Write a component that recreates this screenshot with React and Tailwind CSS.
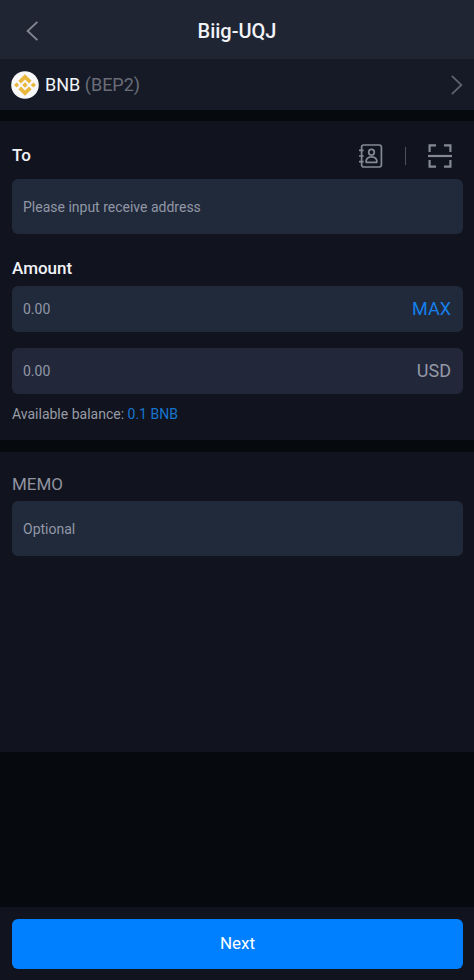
import React, { useState } from 'react';

const BackIcon = () => (
  <svg className="w-3 h-5" viewBox="0 0 12 20" fill="none" stroke="currentColor" strokeWidth="1.8">
    <path d="M11.4 0.8L1.6 10L11.4 19.2" />
  </svg>
);

const ForwardIcon = () => (
  <svg className="w-3 h-5" viewBox="0 0 12 20" fill="none" stroke="currentColor" strokeWidth="1.8">
    <path d="M0.8 0.8L10.4 10L0.8 19.2" />
  </svg>
);

const BnbLogo = () => (
  <svg className="w-7 h-7" viewBox="0 0 28 28">
    <circle cx="14" cy="14" r="13.8" fill="#f8f8fa" />
    <g fill="#e8b73c">
      <path d="M14 3.2L20.6 9.8L18 12.4L14 8.4L10 12.4L7.4 9.8Z" />
      <path d="M14 24.8L20.6 18.2L18 15.6L14 19.6L10 15.6L7.4 18.2Z" />
      <path d="M14 11.3L16.7 14L14 16.7L11.3 14Z" />
      <path d="M5.6 11.4L8.2 14L5.6 16.6L3 14Z" />
      <path d="M22.4 11.4L25 14L22.4 16.6L19.8 14Z" />
    </g>
  </svg>
);

const ContactsIcon = () => (
  <svg className="w-6 h-6" viewBox="0 0 24 24" fill="none" stroke="currentColor" strokeWidth="1.7">
    <rect x="2.6" y="1" width="19.8" height="22" rx="2.2" />
    <path d="M0 6.4H4.6M0 12H4.6M0 17.6H4.6" />
    <circle cx="12.5" cy="8.2" r="2.8" />
    <path d="M7.2 18.4C6.6 15 9 12.8 12.5 12.8C16 12.8 18.4 15 17.8 18.4Z" strokeLinejoin="round" />
  </svg>
);

const ScanIcon = () => (
  <svg className="w-6 h-6" viewBox="0 0 24 24" fill="none" stroke="currentColor" strokeWidth="2.2">
    <path d="M1.6 8V1.4H8M16 1.4H22.4V8M22.4 16V22.6H16M8 22.6H1.6V16" />
    <path d="M0 12H24" />
  </svg>
);

const App = () => {
  const [address, setAddress] = useState('');
  const [amount, setAmount] = useState('');
  const [fiat, setFiat] = useState('');
  const [memo, setMemo] = useState('');

  return (
    <div className="min-h-screen flex flex-col bg-[#060a0f] text-[#f1f3f8] font-[Roboto,sans-serif]">
      {/* Header */}
      <header className="grid grid-cols-[1fr_auto_1fr] items-center h-[59px] px-[26px] pt-[2px] bg-[#1f2532]">
        <button type="button" aria-label="Back" className="justify-self-start text-[#848891]">
          <BackIcon />
        </button>
        <h1 className="text-xl font-medium">Biig-UQJ</h1>
      </header>

      {/* Coin */}
      <button type="button" className="flex items-center h-[51px] px-[11px] bg-[#151a26] text-left">
        <BnbLogo />
        <span className="ml-1.5 flex-1 text-lg">
          BNB <span className="text-[#6a6d77]">(BEP2)</span>
        </span>
        <span className="text-[#5d626d]">
          <ForwardIcon />
        </span>
      </button>

      {/* Address and amount */}
      <section className="mt-[11px] pl-3 pr-[11px] pt-[23px] pb-4 bg-[#11141f]">
        <div className="flex items-center justify-between h-6 pr-[11px]">
          <label htmlFor="address" className="text-[17px] font-medium">To</label>
          <div className="flex items-center text-[#858994]">
            <button type="button" aria-label="Contacts">
              <ContactsIcon />
            </button>
            <div className="mx-[22px] w-px h-[18px] bg-[#4d515c]"></div>
            <button type="button" aria-label="Scan">
              <ScanIcon />
            </button>
          </div>
        </div>
        <input
          id="address"
          value={address}
          onChange={(e) => setAddress(e.target.value)}
          placeholder="Please input receive address"
          className="mt-[11px] block w-full h-[55px] px-[11px] rounded-md bg-[#212a3b] text-sm placeholder:text-[#9297a6] outline-none"
        />

        <label htmlFor="amount" className="block mt-[22px] text-[17px] leading-6 font-medium">Amount</label>
        <div className="flex items-center mt-1.5 h-[46px] pl-[11px] pr-3 rounded-md bg-[#212a3b]">
          <input
            id="amount"
            value={amount}
            onChange={(e) => setAmount(e.target.value)}
            placeholder="0.00"
            className="flex-1 min-w-0 text-sm placeholder:text-[#9297a6] outline-none"
          />
          <button type="button" onClick={() => setAmount('0.1')} className="text-lg text-[#167fea]">
            MAX
          </button>
        </div>
        <div className="flex items-center mt-4 h-[46px] pl-[11px] pr-3 rounded-md bg-[#22283a]">
          <input
            aria-label="Amount in USD"
            value={fiat}
            onChange={(e) => setFiat(e.target.value)}
            placeholder="0.00"
            className="flex-1 min-w-0 text-sm placeholder:text-[#9297a6] outline-none"
          />
          <span className="text-lg text-[#9599a6]">USD</span>
        </div>
        <p className="mt-2.5 text-sm text-[#989ba6]">
          Available balance: <span className="text-[#1674d0]">0.1 BNB</span>
        </p>
      </section>

      {/* Memo */}
      <section className="mt-3 pl-3 pr-[11px] pt-5 min-h-[300px] bg-[#11141f]">
        <label htmlFor="memo" className="block text-[17px] leading-6 text-[#9093a0]">MEMO</label>
        <input
          id="memo"
          value={memo}
          onChange={(e) => setMemo(e.target.value)}
          placeholder="Optional"
          className="mt-[5px] block w-full h-[55px] px-[11px] rounded-md bg-[#212a3b] text-sm placeholder:text-[#9297a6] outline-none"
        />
      </section>

      {/* Footer */}
      <footer className="mt-auto pl-3 pr-[11px] pt-3 pb-[11px] bg-[#11141f]">
        <button type="button" className="w-full h-[50px] rounded-md bg-[#0080ff] text-[17px] text-white">
          Next
        </button>
      </footer>
    </div>
  );
};

export default App;
